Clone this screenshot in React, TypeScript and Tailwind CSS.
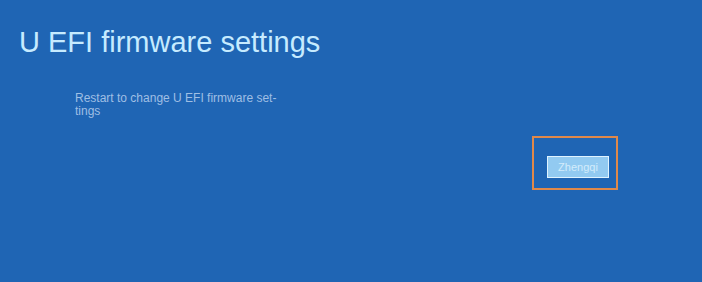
export default function App() {
  return (
    <div className="w-full h-[282px] bg-[#1f65b4] overflow-hidden font-['Liberation_Sans',Arial,sans-serif] pt-[25px]">
      <h1 className="pl-[19px] text-[29px] leading-[34px] text-[#c6ebff] font-normal">
        U EFI firmware settings
      </h1>
      <p className="ml-[75px] mt-[33px] text-[12px] leading-[13px] text-[#9fbfe4]">
        Restart to change U EFI firmware set-
        <br />
        tings
      </p>
      <div className="ml-[532px] mt-[18px] w-[86px] h-[54px] border-2 border-[#e0894a] pl-[13px] pt-[18px]">
        <button className="w-[62px] h-[22px] bg-[#92caf1] border border-[#dff3ff] text-[11px] leading-none text-[#d3ecfb] flex items-center justify-center">
          Zhengqi
        </button>
      </div>
    </div>
  );
}
